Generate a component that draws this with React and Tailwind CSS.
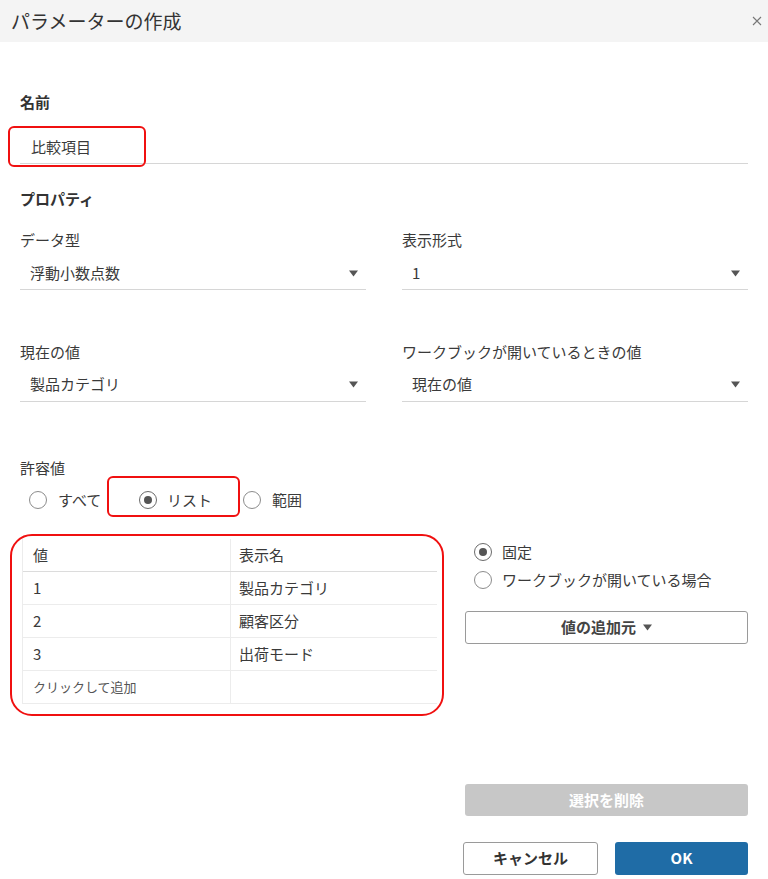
import React from 'react';

const FONT = { fontFamily: '"Noto Sans CJK JP", "Noto Sans", sans-serif' };

function Caret({ className = '' }) {
  return (
    <svg className={className} width="9" height="7" viewBox="0 0 9 7">
      <path d="M0 0.5h9L4.5 6.5z" fill="currentColor" />
    </svg>
  );
}

function Radio({ checked }) {
  return (
    <span
      className={`w-[18px] h-[18px] rounded-full border bg-white flex items-center justify-center shrink-0 ${
        checked ? 'border-[#6b6b6b]' : 'border-[#8c8c8c]'
      }`}
    >
      {checked && <span className="w-[8px] h-[8px] rounded-full bg-[#555]" />}
    </span>
  );
}

function Select({ label, value, labelGap, pad }) {
  return (
    <div>
      <div className="text-[15px] leading-[20px] text-[#3a3a3a]">{label}</div>
      <div
        className={`flex items-center justify-between pl-[10px] pr-[8px] border-b border-[#d6d6d6] ${labelGap} ${pad}`}
      >
        <span className="text-[15px] leading-[20px] text-[#3a3a3a]">{value}</span>
        <Caret className="text-[#555]" />
      </div>
    </div>
  );
}

const rows = [
  ['1', '製品カテゴリ'],
  ['2', '顧客区分'],
  ['3', '出荷モード'],
];

export default function App() {
  return (
    <div className="w-[768px] h-[879px] bg-white overflow-hidden" style={FONT}>
      {/* title bar */}
      <div className="h-[42px] bg-[#f4f4f4] flex items-center justify-between pl-[11px] pr-[6px]">
        <span className="text-[19px] text-[#333] leading-[26px]">パラメーターの作成</span>
        <svg width="10" height="10" viewBox="0 0 10 10" className="text-[#777]">
          <path d="M1 1l8 8M9 1l-8 8" stroke="currentColor" strokeWidth="1.1" />
        </svg>
      </div>

      <div className="px-[20px]">
        <div className="mt-[50px] text-[15px] leading-[20px] font-bold text-[#333]">名前</div>

        <div className="relative mt-[15px] h-[37px] border-b border-[#d6d6d6] pl-[11px] pt-[10px]">
          <div className="text-[15px] leading-[20px] text-[#3a3a3a]">比較項目</div>
          <div className="absolute left-[-12px] top-[-1px] w-[138px] h-[41px] rounded-[6px] border-2 border-[#f01010]" />
        </div>

        <div className="mt-[25px] text-[15px] leading-[20px] font-bold text-[#333]">プロパティ</div>

        <div className="grid grid-cols-2 gap-x-[36px] mt-[21px]">
          <Select label="データ型" value="浮動小数点数" labelGap="mt-[13px]" pad="pb-[6px]" />
          <Select label="表示形式" value="1" labelGap="mt-[13px]" pad="pb-[6px]" />
        </div>

        <div className="grid grid-cols-2 gap-x-[36px] mt-[52px]">
          <Select label="現在の値" value="製品カテゴリ" labelGap="mt-[12px]" pad="pb-[7px]" />
          <Select label="ワークブックが開いているときの値" value="現在の値" labelGap="mt-[12px]" pad="pb-[7px]" />
        </div>

        <div className="mt-[56px] text-[15px] leading-[20px] text-[#3a3a3a]">許容値</div>

        <div className="relative mt-[12px] flex items-center pl-[9px] h-[20px]">
          <label className="w-[110px] flex items-center gap-[11px]">
            <Radio />
            <span className="text-[15px] leading-[20px] text-[#3a3a3a]">すべて</span>
          </label>
          <label className="w-[104px] flex items-center gap-[10px]">
            <Radio checked />
            <span className="text-[15px] leading-[20px] text-[#3a3a3a]">リスト</span>
          </label>
          <label className="flex items-center gap-[11px]">
            <Radio />
            <span className="text-[15px] leading-[20px] text-[#3a3a3a]">範囲</span>
          </label>
          <div className="absolute left-[87px] top-[-14px] w-[133px] h-[41px] rounded-[6px] border-2 border-[#f01010]" />
        </div>

        <div className="flex mt-[29px]">
          <div className="relative ml-[2px] w-[415px] border-l border-[#ececec] text-[15px] text-[#3a3a3a]">
            <div className="flex h-[33px] border-b border-[#dcdcdc]">
              <div className="w-[208px] border-r border-[#ececec] pl-[10px] flex items-center">値</div>
              <div className="flex-1 pl-[8px] flex items-center">表示名</div>
            </div>
            {rows.map(([v, n]) => (
              <div key={v} className="flex h-[33px] border-b border-[#ececec]">
                <div className="w-[208px] border-r border-[#ececec] pl-[10px] flex items-center">{v}</div>
                <div className="flex-1 pl-[8px] flex items-center">{n}</div>
              </div>
            ))}
            <div className="flex h-[33px] border-b border-[#ececec]">
              <div className="w-[208px] border-r border-[#ececec] pl-[10px] flex items-center text-[13px] text-[#555]">
                クリックして追加
              </div>
              <div className="flex-1" />
            </div>
            <div className="absolute left-[-13px] top-[-5px] w-[434px] h-[182px] rounded-[22px] border-2 border-[#f01010]" />
          </div>

          <div className="ml-[28px] w-[283px]">
            <label className="mt-[3px] pl-[9px] flex items-center gap-[10px]">
              <Radio checked />
              <span className="text-[15px] leading-[20px] text-[#3a3a3a]">固定</span>
            </label>
            <label className="mt-[8px] pl-[9px] flex items-center gap-[10px]">
              <Radio />
              <span className="text-[15px] leading-[20px] text-[#3a3a3a]">ワークブックが開いている場合</span>
            </label>
            <button className="mt-[21px] w-full h-[33px] rounded-[3px] border border-[#9a9a9a] bg-white flex items-center justify-center gap-[7px] text-[15px] font-bold text-[#444]">
              値の追加元
              <Caret className="text-[#555]" />
            </button>
          </div>
        </div>

        <div className="flex justify-end mt-[80px]">
          <button className="w-[283px] h-[32px] rounded-[3px] bg-[#c7c7c7] text-white text-[15px] font-bold">
            選択を削除
          </button>
        </div>

        <div className="flex justify-end gap-[17px] mt-[26px]">
          <button className="w-[135px] h-[33px] rounded-[3px] border border-[#9a9a9a] bg-white text-[15px] font-bold text-[#333]">
            キャンセル
          </button>
          <button className="w-[133px] h-[33px] rounded-[3px] bg-[#1f6ca6] text-white text-[15px] font-bold">
            OK
          </button>
        </div>
      </div>
    </div>
  );
}
